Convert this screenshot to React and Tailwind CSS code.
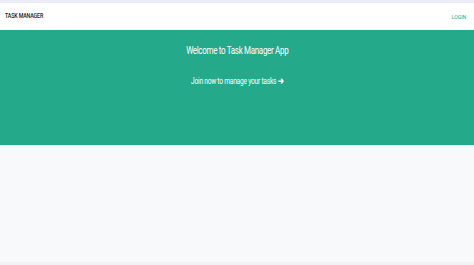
export default function App() {
  return (
    <div className="w-[474px] h-[265px] flex flex-col bg-[#f8f9fb] overflow-hidden" style={{ fontFamily: "Roboto, 'Liberation Sans', sans-serif" }}>
      <div className="h-[3px] bg-[#ecebf8]" />
      <header className="h-[27px] bg-white flex items-center justify-between px-[5px]">
        <span className="inline-block origin-left scale-x-[0.76] text-[7px] font-medium text-[#222] tracking-[-0.2px]">TASK MANAGER</span>
        <span className="inline-block origin-right scale-x-[0.85] text-[6px] text-[#26a88c] mr-[3px]">LOGIN</span>
      </header>
      <section className="h-[115px] bg-[#25a98b] flex flex-col items-center text-white">
        <h1 className="inline-block mt-[13px] scale-x-[0.76] text-[10.5px] tracking-[-0.4px]">Welcome to Task Manager App</h1>
        <p className="inline-block mt-[16px] scale-x-[0.78] text-[8.5px] tracking-[-0.3px]">Join now to manage your tasks <span className="font-bold">➔</span></p>
      </section>
      <div className="flex-1" />
      <div className="h-[3px] bg-[#f1f2f5]" />
    </div>
  );
}
